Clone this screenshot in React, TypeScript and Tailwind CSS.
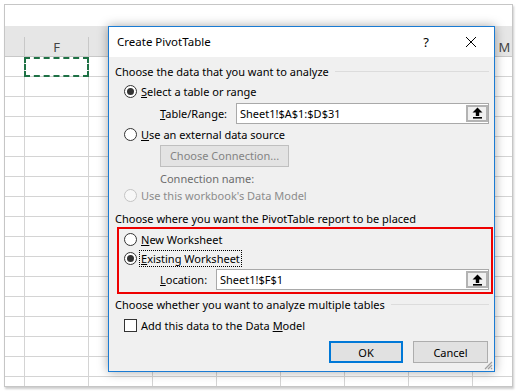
import React from "react"

const COLS = ["F", "G", "H", "I", "J", "K", "L", "M"]
const ROWS = Array.from({ length: 17 }, (_, i) => i + 1)

function Radio({ checked, disabled }: { checked?: boolean; disabled?: boolean }) {
  return (
    <span
      className={`w-[13px] h-[13px] rounded-full border flex items-center justify-center shrink-0 ${
        disabled ? "border-[#c4c4c4] bg-[#f7f7f7]" : "border-[#333333] bg-white"
      }`}
    >
      {checked && <span className="w-[7px] h-[7px] rounded-full bg-[#333333]" />}
    </span>
  )
}

function PickButton() {
  return (
    <span className="w-[22px] h-[17px] border-2 border-[#b3b3b3] bg-[#f0f0f0] flex items-center justify-center shrink-0">
      <svg width="11" height="12" viewBox="0 0 11 12">
        <path d="M5.5 0.5 L10.5 5.5 H7.2 V9 H3.8 V5.5 H0.5 Z" fill="#000" />
        <rect x="1" y="10" width="9" height="1.6" fill="#000" />
      </svg>
    </span>
  )
}

function Section({ text, line = true }: { text: string; line?: boolean }) {
  return (
    <div className="flex items-center gap-[6px] pl-[6px] pr-[5px]">
      <span className="whitespace-nowrap">{text}</span>
      {line && <span className="flex-1 h-px bg-[#dcdcdc]" />}
    </div>
  )
}

function Sheet() {
  return (
    <div className="mt-[4px] ml-[4px] w-[509px] h-[383px] border border-[#c6c6c6] bg-white overflow-hidden shadow-[1px_2px_2px_rgba(0,0,0,0.2)]">
      <div className="h-[21px]" />
      <div className="h-[31px] bg-[#e6e6e6] border-b border-[#c8c8c8] flex">
        <div className="w-[20px] shrink-0 flex justify-end">
          <span className="w-px h-[19px] self-end bg-[#c8c8c8]" />
        </div>
        {COLS.map(c => (
          <div key={c} className="w-[64px] shrink-0 flex">
            {/* columns G..L sit under the dialog, so only F and M get a label */}
            <span className="flex-1 text-center self-end pb-[2px] text-[13px] text-[#444444]">
              {c === "F" || c === "M" ? c : ""}
            </span>
            <span className="w-px h-[19px] self-end bg-[#c8c8c8]" />
          </div>
        ))}
      </div>
      {ROWS.map(r => (
        <div key={r} className="h-[20px] flex border-b border-[#d4d4d4]">
          <div className="w-[20px] shrink-0 border-r border-[#d4d4d4]" />
          {COLS.map(c => (
            <div key={c} className="w-[64px] shrink-0 border-r border-[#d4d4d4] relative">
              {r === 1 && c === "F" && (
                <div className="absolute left-[-1px] top-0 w-[65px] h-[20px] border-2 border-dashed border-[#1e7145]" />
              )}
            </div>
          ))}
        </div>
      ))}
    </div>
  )
}

export default function App() {
  return (
    <div className="w-[521px] h-[391px] bg-white relative overflow-hidden font-['Noto_Sans',sans-serif] text-[11px] text-black leading-none">
      <Sheet />

      <div className="absolute left-[108px] top-[26px] w-[387px] h-[346px] border border-[#1a7bd3] bg-[#f0f0f0] shadow-[0_0_10px_rgba(0,0,0,0.35)] flex flex-col">
        {/* title bar */}
        <div className="h-[30px] bg-white flex items-center shrink-0">
          <span className="pl-[8px] flex-1 text-[11.5px]">Create PivotTable</span>
          <span className="w-[44px] text-center text-[13px]">?</span>
          <span className="w-[46px] flex justify-center">
            <svg width="12" height="12" viewBox="0 0 12 12">
              <path d="M1 1 L11 11 M11 1 L1 11" stroke="#000" strokeWidth="1" />
            </svg>
          </span>
        </div>

        {/* body */}
        <div className="flex flex-col pt-[4px] relative flex-1">
          <div className="h-[20px] flex flex-col justify-center">
            <Section text="Choose the data that you want to analyze" />
          </div>
          <div className="h-[20px] flex items-center pl-[15px] gap-[4px]">
            <Radio checked />
            <span><span className="underline">S</span>elect a table or range</span>
          </div>
          <div className="h-[24px] flex items-center pl-[51px]">
            <span className="w-[76px] shrink-0"><span className="underline">T</span>able/Range:</span>
            <div className="w-[253px] h-[21px] border border-[#a9a9a9] bg-white flex items-center">
              <span className="flex-1 pl-[3px]">Sheet1!$A$1:$D$31</span>
              <PickButton />
            </div>
          </div>
          <div className="h-[18px] flex items-center pl-[15px] gap-[4px]">
            <Radio />
            <span><span className="underline">U</span>se an external data source</span>
          </div>
          <div className="h-[25px] flex items-center pl-[51px]">
            <span className="w-[129px] h-[22px] border border-[#bfbfbf] bg-[#e3e3e3] text-[#838383] flex items-center justify-center">
              Choose Connection...
            </span>
          </div>
          <div className="h-[20px] flex items-center pl-[51px] text-[#6d6d6d]">Connection name:</div>
          <div className="h-[14px] flex items-center pl-[15px] gap-[4px] text-[#8c8c8c]">
            <Radio disabled />
            <span>Use this workbook's Data Model</span>
          </div>
          <div className="h-[18px] mt-[7px] flex flex-col justify-center">
            <Section text="Choose where you want the PivotTable report to be placed" line={false} />
          </div>

          <div className="ml-[8px] w-[376px] h-[67px] border-2 border-[#ee0000] flex flex-col">
            <div className="h-[20px] flex items-center pl-[5px] gap-[4px]">
              <Radio />
              <span><span className="underline">N</span>ew Worksheet</span>
            </div>
            <div className="h-[18px] flex items-center pl-[5px] gap-[3px]">
              <Radio checked />
              <span className="outline outline-1 outline-dotted outline-black px-px py-[2px]">
                <span className="underline">E</span>xisting Worksheet
              </span>
            </div>
            <div className="h-[25px] flex items-center pl-[41px]">
              <span className="w-[56px] shrink-0"><span className="underline">L</span>ocation:</span>
              <div className="w-[273px] h-[21px] border border-[#a9a9a9] bg-white flex items-center">
                <span className="flex-1 pl-[3px]">Sheet1!$F$1</span>
                <PickButton />
              </div>
            </div>
          </div>

          <div className="h-[20px] flex flex-col justify-center">
            <Section text="Choose whether you want to analyze multiple tables" />
          </div>
          <div className="h-[22px] flex items-center pl-[15px] gap-[4px]">
            <span className="w-[13px] h-[13px] border border-[#333333] bg-white shrink-0" />
            <span>Add this data to the Data <span className="underline">M</span>odel</span>
          </div>
          <div className="mt-[5px] flex justify-end gap-[10px] pr-[6px]">
            <span className="w-[74px] h-[22px] border-2 border-[#0078d7] bg-[#e1e1e1] flex items-center justify-center">OK</span>
            <span className="w-[75px] h-[22px] border border-[#adadad] bg-[#e1e1e1] flex items-center justify-center">Cancel</span>
          </div>

          <svg className="absolute right-[1px] bottom-[1px]" width="10" height="10" viewBox="0 0 10 10">
            <path d="M9 2 L2 9 M9 5 L5 9 M9 8 L8 9" stroke="#a0a0a0" strokeWidth="1.2" />
          </svg>
        </div>
      </div>
    </div>
  )
}
